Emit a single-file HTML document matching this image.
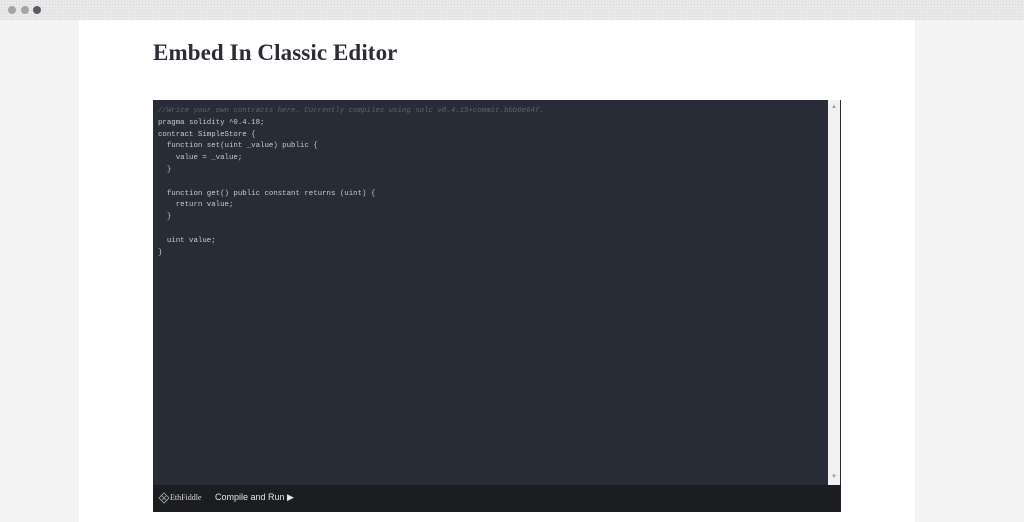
<!DOCTYPE html>
<html><head><style>
*{margin:0;padding:0;box-sizing:border-box}
body{width:1024px;height:522px;overflow:hidden;background:#f4f4f4;position:relative;font-family:"Liberation Sans",sans-serif}
.top{position:absolute;left:0;top:0;width:1024px;height:20px;background:#e9e9e9;background-image:radial-gradient(#d6d6d6 0.6px,transparent 0.8px);background-size:3px 3px}
.dot{position:absolute;top:6px;width:8px;height:8px;border-radius:50%}
.col{position:absolute;left:79px;top:20px;width:836px;height:502px;background:#fff}
h1{position:absolute;left:153px;top:40px;font-family:"Liberation Serif",serif;font-weight:bold;font-size:23px;color:#2b2d36;letter-spacing:0.1px}
.ed{position:absolute;left:153px;top:100px;width:688px;height:412px;background:#282c36}
pre{position:absolute;left:5px;top:6px;font-family:"Liberation Mono",monospace;font-size:7.4px;line-height:11.8px;color:#c8ccd4}
.c{color:#5c6370;font-style:italic}
.sb{position:absolute;left:675px;top:0;width:12px;height:385px;background:#f1f1f1}
.ft{position:absolute;left:0;top:385px;width:688px;height:27px;background:#1c1d21;color:#e6e6e6}
</style></head><body>
<div class="top">
<div class="dot" style="left:8px;background:#a9a1a4"></div>
<div class="dot" style="left:21px;background:#a9a1a4"></div>
<div class="dot" style="left:33px;background:#5e5868"></div>
</div>
<div class="col"></div>
<h1>Embed In Classic Editor</h1>
<div class="ed">
<pre><span class="c">//Write your own contracts here. Currently compiles using solc v0.4.15+commit.bbb8e64f.</span>
pragma solidity ^0.4.18;
contract SimpleStore {
  function set(uint _value) public {
    value = _value;
  }

  function get() public constant returns (uint) {
    return value;
  }

  uint value;
}</pre>
<div class="sb"><div style="position:absolute;left:3px;top:4px;font-size:6px;color:#999">▲</div><div style="position:absolute;left:3px;top:374px;font-size:6px;color:#999">▼</div></div>
<div class="ft">
<svg style="position:absolute;left:5px;top:7px" width="12" height="12" viewBox="0 0 12 12"><path d="M6 1L11 6 6 11 1 6Z M3 3L9 9 M4 8L8 4" stroke="#aaa" fill="none" stroke-width="0.8"/></svg>
<span style="position:absolute;left:17px;top:8px;font-family:'Liberation Serif',serif;font-size:8px;color:#ddd">EthFiddle</span>
<span style="position:absolute;left:62px;top:7px;font-size:9px">Compile and Run ▶</span>
</div>
</div>
</body></html>
